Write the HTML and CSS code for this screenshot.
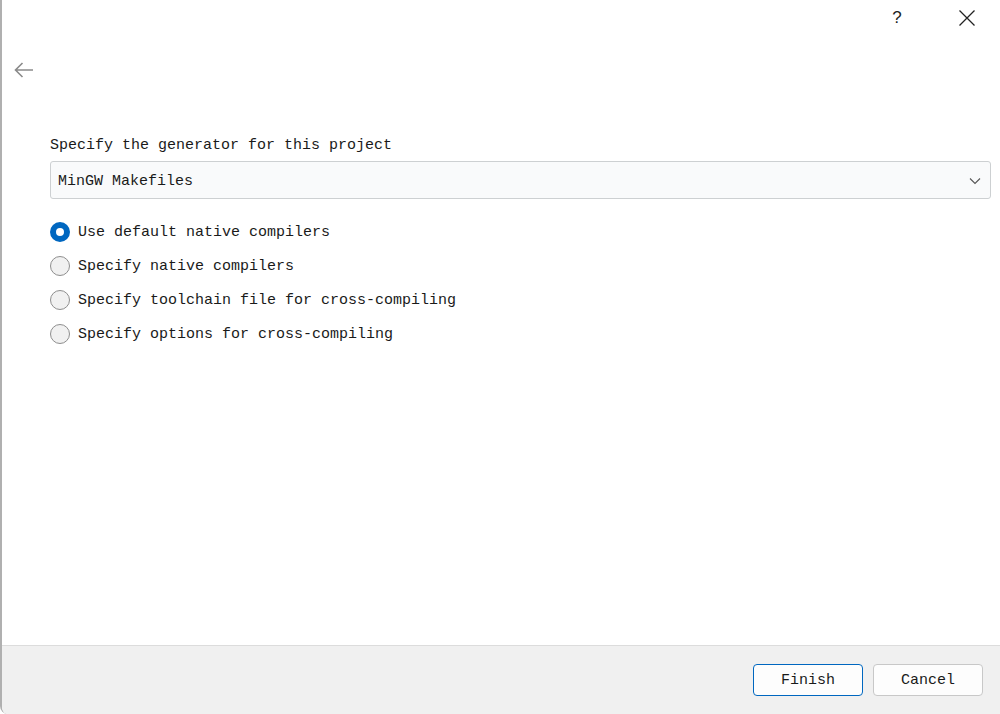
FILE: index.html
```html
<!DOCTYPE html>
<html>
<head>
<meta charset="utf-8">
<link rel="stylesheet" href="styles.css">
</head>
<body>
<div class="window">
  <div class="titlebar">
    <span class="help">?</span>
    <svg class="close" width="18" height="18" viewBox="0 0 18 18"><path d="M1.5 1.5 L16.5 16.5 M16.5 1.5 L1.5 16.5" stroke="#222" stroke-width="1.3" fill="none"/></svg>
  </div>
  <div class="navrow">
    <svg class="back" width="22" height="18" viewBox="0 0 22 18"><path d="M20 9 H2.5 M9.5 2 L2.5 9 L9.5 16" stroke="#8a8a8a" stroke-width="1.6" fill="none"/></svg>
  </div>
  <div class="content">
    <div class="label">Specify the generator for this project</div>
    <div class="combo">
      <span>MinGW Makefiles</span>
      <svg width="12" height="8" viewBox="0 0 12 8"><path d="M1 1.5 L6 6.5 L11 1.5" stroke="#555" stroke-width="1.1" fill="none"/></svg>
    </div>
    <div class="radios">
      <label class="radio"><span class="dot checked"></span>Use default native compilers</label>
      <label class="radio"><span class="dot"></span>Specify native compilers</label>
      <label class="radio"><span class="dot"></span>Specify toolchain file for cross-compiling</label>
      <label class="radio"><span class="dot"></span>Specify options for cross-compiling</label>
    </div>
  </div>
  <div class="footer">
    <button class="btn primary">Finish</button>
    <button class="btn">Cancel</button>
  </div>
</div>
</body>
</html>
```
FILE: styles.css
```css
html, body {
  margin: 0;
  padding: 0;
  width: 1000px;
  height: 714px;
  overflow: hidden;
  background: #ffffff;
}
.window {
  width: 1000px;
  height: 714px;
  box-sizing: border-box;
  border-left: 2px solid #b0b0b0;
  border-bottom-left-radius: 8px;
  display: flex;
  flex-direction: column;
  font-family: "Liberation Mono", "DejaVu Sans Mono", monospace;
  font-size: 15px;
  color: #1a1a1a;
}
.titlebar {
  height: 36px;
  flex: none;
  display: flex;
  justify-content: flex-end;
  align-items: center;
  padding-right: 24px;
}
.help {
  font-family: "Liberation Sans", "DejaVu Sans", sans-serif;
  font-size: 17px;
  color: #222;
  width: 20px;
  text-align: center;
  margin-right: 51px;
}
.close {
  display: block;
}
.navrow {
  height: 68px;
  flex: none;
  display: flex;
  align-items: center;
  padding-left: 11px;
}
.back { display: block; }
.content {
  flex: 1;
  padding: 32px 9px 0 48px;
}
.label {
  height: 20px;
  line-height: 20px;
  margin-bottom: 5px;
}
.combo {
  height: 38px;
  box-sizing: border-box;
  border: 1px solid #cdd0d2;
  border-radius: 3px;
  background: #f9fafb;
  display: flex;
  align-items: center;
  justify-content: space-between;
  padding: 2px 9px 0 7px;
}
.radios {
  display: flex;
  flex-direction: column;
  margin-top: 23px;
  gap: 14px;
}
.radio {
  display: flex;
  align-items: center;
  height: 20px;
  gap: 8px;
}
.dot {
  width: 20px;
  height: 20px;
  box-sizing: border-box;
  border-radius: 50%;
  border: 1px solid #8e8e8e;
  background: #f1f1f1;
}
.dot.checked {
  border: 6px solid #0067c0;
  background: #ffffff;
}
.footer {
  height: 69px;
  flex: none;
  box-sizing: border-box;
  background: #f0f0f0;
  border-top: 1px solid #dcdcdc;
  border-bottom-left-radius: 6px;
  display: flex;
  justify-content: flex-end;
  align-items: flex-start;
  padding: 18px 17px 0 0;
  gap: 10px;
}
.btn {
  width: 110px;
  height: 32px;
  background: #fdfdfd;
  border: 1px solid #c8c8c8;
  border-radius: 4px;
  font-family: "Liberation Mono", "DejaVu Sans Mono", monospace;
  font-size: 15px;
  color: #1a1a1a;
  padding: 0;
}
.btn.primary {
  border-color: #0067c0;
}
```
